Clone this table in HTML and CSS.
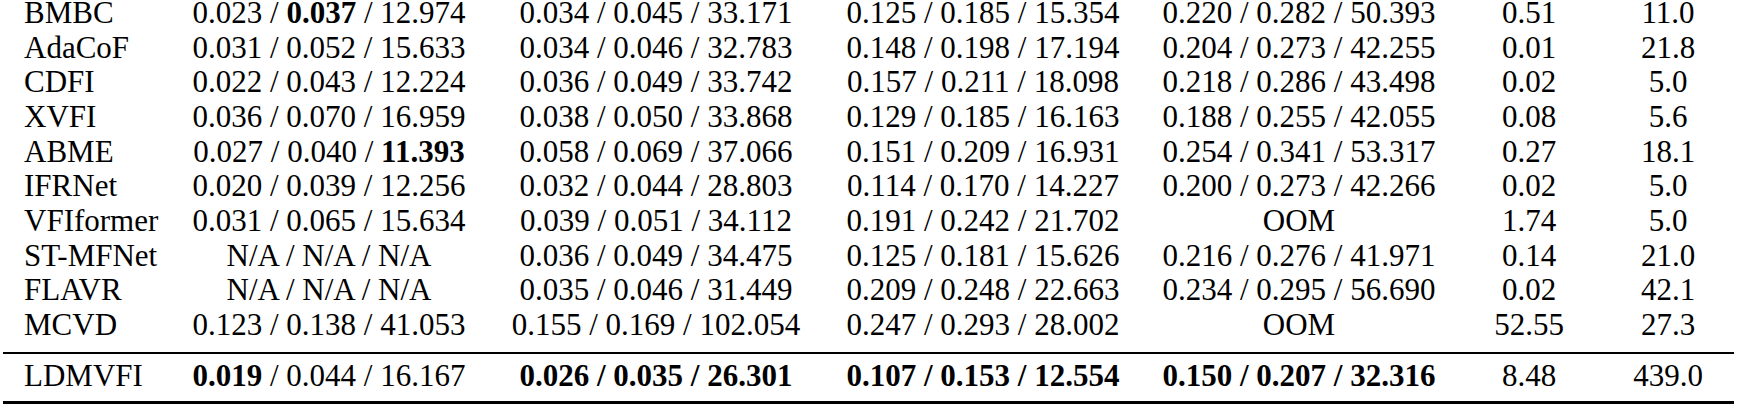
FILE: index.html
```html
<!DOCTYPE html>
<html lang="en">
<head>
<meta charset="UTF-8" />
<meta name="viewport" content="width=device-width, initial-scale=1" />
<title>VFI results</title>
<link rel="stylesheet" href="styles.css">
</head>
<body>
<table class="results">
  <colgroup>
    <col class="c-method">
    <col class="c-a">
    <col class="c-b">
    <col class="c-c">
    <col class="c-d">
    <col class="c-e">
    <col class="c-f">
  </colgroup>
  <tbody>
    <tr><td class="method">BMBC</td><td>0.023 / <b>0.037</b> / 12.974</td><td>0.034 / 0.045 / 33.171</td><td>0.125 / 0.185 / 15.354</td><td>0.220 / 0.282 / 50.393</td><td>0.51</td><td>11.0</td></tr>
    <tr><td class="method">AdaCoF</td><td>0.031 / 0.052 / 15.633</td><td>0.034 / 0.046 / 32.783</td><td>0.148 / 0.198 / 17.194</td><td>0.204 / 0.273 / 42.255</td><td>0.01</td><td>21.8</td></tr>
    <tr><td class="method">CDFI</td><td>0.022 / 0.043 / 12.224</td><td>0.036 / 0.049 / 33.742</td><td>0.157 / 0.211 / 18.098</td><td>0.218 / 0.286 / 43.498</td><td>0.02</td><td>5.0</td></tr>
    <tr><td class="method">XVFI</td><td>0.036 / 0.070 / 16.959</td><td>0.038 / 0.050 / 33.868</td><td>0.129 / 0.185 / 16.163</td><td>0.188 / 0.255 / 42.055</td><td>0.08</td><td>5.6</td></tr>
    <tr><td class="method">ABME</td><td>0.027 / 0.040 / <b>11.393</b></td><td>0.058 / 0.069 / 37.066</td><td>0.151 / 0.209 / 16.931</td><td>0.254 / 0.341 / 53.317</td><td>0.27</td><td>18.1</td></tr>
    <tr><td class="method">IFRNet</td><td>0.020 / 0.039 / 12.256</td><td>0.032 / 0.044 / 28.803</td><td>0.114 / 0.170 / 14.227</td><td>0.200 / 0.273 / 42.266</td><td>0.02</td><td>5.0</td></tr>
    <tr><td class="method">VFIformer</td><td>0.031 / 0.065 / 15.634</td><td>0.039 / 0.051 / 34.112</td><td>0.191 / 0.242 / 21.702</td><td>OOM</td><td>1.74</td><td>5.0</td></tr>
    <tr><td class="method">ST-MFNet</td><td>N/A / N/A / N/A</td><td>0.036 / 0.049 / 34.475</td><td>0.125 / 0.181 / 15.626</td><td>0.216 / 0.276 / 41.971</td><td>0.14</td><td>21.0</td></tr>
    <tr><td class="method">FLAVR</td><td>N/A / N/A / N/A</td><td>0.035 / 0.046 / 31.449</td><td>0.209 / 0.248 / 22.663</td><td>0.234 / 0.295 / 56.690</td><td>0.02</td><td>42.1</td></tr>
    <tr class="last-base"><td class="method">MCVD</td><td>0.123 / 0.138 / 41.053</td><td>0.155 / 0.169 / 102.054</td><td>0.247 / 0.293 / 28.002</td><td>OOM</td><td>52.55</td><td>27.3</td></tr>
    <tr class="ours"><td class="method">LDMVFI</td><td><b>0.019</b> / 0.044 / 16.167</td><td><b>0.026 / 0.035 / 26.301</b></td><td><b>0.107 / 0.153 / 12.554</b></td><td><b>0.150 / 0.207 / 32.316</b></td><td>8.48</td><td>439.0</td></tr>
  </tbody>
</table>
</body>
</html>
```

FILE: styles.css
```css
body {
  margin: 0;
  background: #fff;
  color: #000;
  overflow: hidden;
}
.results {
  border-collapse: collapse;
  table-layout: fixed;
  width: 1731px;
  margin: -4px 0 0 3px;
  font-size: 31px;
  line-height: 34.67px;
}
.c-method { width: 167px; }
.c-a { width: 318px; }
.c-b { width: 336px; }
.c-c { width: 318px; }
.c-d { width: 314px; }
.c-e { width: 146px; }
.c-f { width: 132px; }
.results td {
  font-family: "Liberation Serif";
  padding: 0;
  text-align: center;
  white-space: nowrap;
}
.results td.method {
  text-align: left;
  padding-left: 21px;
}
.results b {
  font-weight: bold;
}
.last-base td {
  padding-bottom: 9px;
}
.ours td {
  border-top: 2px solid #000;
  border-bottom: 3px solid #000;
  padding-top: 5px;
  padding-bottom: 8px;
}
```
